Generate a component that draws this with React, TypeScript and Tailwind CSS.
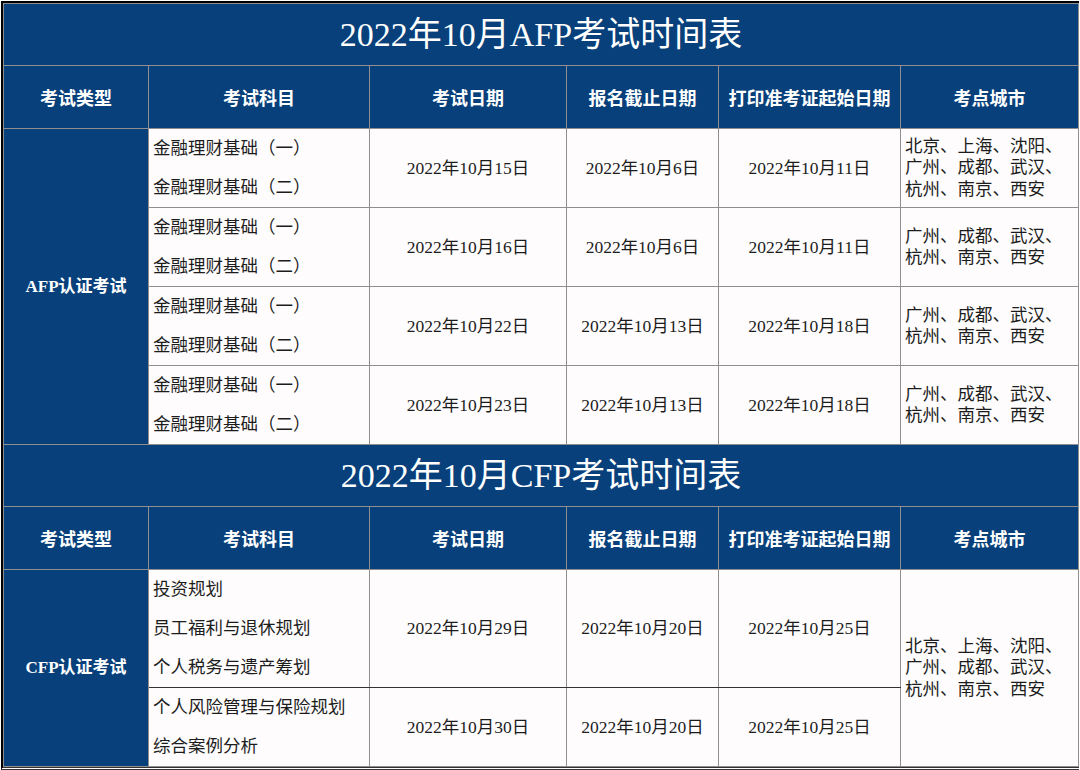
import React from 'react';

const serif = { fontFamily: '"Liberation Serif", "Noto Sans CJK SC", serif' };

const headers = ['考试类型', '考试科目', '考试日期', '报名截止日期', '打印准考证起始日期', '考点城市'];

const allCities = ['北京、上海、沈阳、', '广州、成都、武汉、', '杭州、南京、西安'];
const someCities = ['广州、成都、武汉、', '杭州、南京、西安'];

const afpRows = [
  { exam: '2022年10月15日', deadline: '2022年10月6日', print: '2022年10月11日', cities: allCities },
  { exam: '2022年10月16日', deadline: '2022年10月6日', print: '2022年10月11日', cities: someCities },
  { exam: '2022年10月22日', deadline: '2022年10月13日', print: '2022年10月18日', cities: someCities },
  { exam: '2022年10月23日', deadline: '2022年10月13日', print: '2022年10月18日', cities: someCities },
];

const afpSubjects = ['金融理财基础（一）', '金融理财基础（二）'];

const cell = 'border border-[#8f8f8f] p-0';

function TitleRow({ text }: { text: string }) {
  return (
    <tr className="h-[62px]">
      <td colSpan={6} className={`${cell} bg-[#07407a] text-center text-[34px] text-white`}>
        {text}
      </td>
    </tr>
  );
}

function HeaderRow() {
  return (
    <tr className="h-[63px]">
      {headers.map((h) => (
        <td
          key={h}
          className={`${cell} bg-[#07407a] text-center text-[18px] font-bold text-white`}
          style={{ fontFamily: '"Noto Sans CJK SC", sans-serif' }}
        >
          {h}
        </td>
      ))}
    </tr>
  );
}

function Subjects({ items }: { items: string[] }) {
  return (
    <div className="flex flex-col pl-[4px]">
      {items.map((s) => (
        <div key={s} className="flex h-[39px] items-center">
          {s}
        </div>
      ))}
    </div>
  );
}

function Cities({ lines }: { lines: string[] }) {
  return (
    <div className="pl-[4px] leading-[21.5px]">
      {lines.map((l) => (
        <div key={l}>{l}</div>
      ))}
    </div>
  );
}

function TypeCell({ label, rows }: { label: string; rows: number }) {
  return (
    <td
      rowSpan={rows}
      className={`${cell} bg-[#07407a] text-center text-[17px] font-bold text-white`}
    >
      {label}
    </td>
  );
}

export default function App() {
  return (
    <div className="w-[1080px] h-[770px] bg-white pl-[1px] pt-[1px]" style={serif}>
      <div className="w-[1078px] border-l-2 border-t-2 border-black border-b-[3px] border-b-[#333] border-double">
        <table className="w-full table-fixed border-collapse text-[17.5px] text-[#1c1c1c]">
          <colgroup>
            <col className="w-[145px]" />
            <col className="w-[221px]" />
            <col className="w-[197px]" />
            <col className="w-[152px]" />
            <col className="w-[182px]" />
            <col />
          </colgroup>
          <tbody>
            <TitleRow text="2022年10月AFP考试时间表" />
            <HeaderRow />
            {afpRows.map((r, i) => (
              <tr key={i} className={i === 3 ? 'h-[78px] bg-[#fefcfd]' : 'h-[79px] bg-[#fefcfd]'}>
                {i === 0 && <TypeCell label="AFP认证考试" rows={4} />}
                <td className={cell}>
                  <Subjects items={afpSubjects} />
                </td>
                <td className={`${cell} text-center`}>{r.exam}</td>
                <td className={`${cell} text-center`}>{r.deadline}</td>
                <td className={`${cell} text-center`}>{r.print}</td>
                <td className={cell}>
                  <Cities lines={r.cities} />
                </td>
              </tr>
            ))}
            <TitleRow text="2022年10月CFP考试时间表" />
            <HeaderRow />
            <tr className="h-[118px] bg-[#fefcfd]">
              <TypeCell label="CFP认证考试" rows={2} />
              <td className={`${cell} border-b-[#333]`}>
                <Subjects items={['投资规划', '员工福利与退休规划', '个人税务与遗产筹划']} />
              </td>
              <td className={`${cell} border-b-[#333] text-center`}>2022年10月29日</td>
              <td className={`${cell} border-b-[#333] text-center`}>2022年10月20日</td>
              <td className={`${cell} border-b-[#333] text-center`}>2022年10月25日</td>
              <td rowSpan={2} className={cell}>
                <Cities lines={allCities} />
              </td>
            </tr>
            <tr className="h-[78px] bg-[#fefcfd]">
              <td className={cell}>
                <Subjects items={['个人风险管理与保险规划', '综合案例分析']} />
              </td>
              <td className={`${cell} text-center`}>2022年10月30日</td>
              <td className={`${cell} text-center`}>2022年10月20日</td>
              <td className={`${cell} text-center`}>2022年10月25日</td>
            </tr>
          </tbody>
        </table>
      </div>
    </div>
  );
}
